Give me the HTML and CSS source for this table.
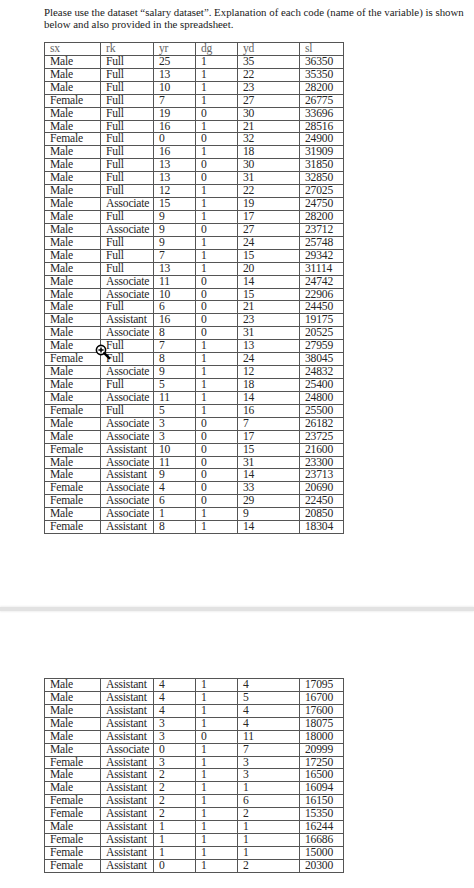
FILE: index.html
```html
<!DOCTYPE html>
<html>
<head>
<meta charset="utf-8">
<link rel="stylesheet" href="styles.css">
</head>
<body>
<div class="page">
  <section class="top">
    <p class="intro">Please use the dataset “salary dataset”. Explanation of each code (name of the variable) is shown below and also provided in the spreadsheet.</p>
    <div class="tablewrap">
      <table class="data">
        <colgroup><col class="c1"><col class="c2"><col class="c3"><col class="c4"><col class="c5"><col class="c6"></colgroup>
        <tr class="head"><td>sx</td><td>rk</td><td>yr</td><td>dg</td><td>yd</td><td>sl</td></tr>
        <tr><td>Male</td><td>Full</td><td>25</td><td>1</td><td>35</td><td>36350</td></tr>
        <tr><td>Male</td><td>Full</td><td>13</td><td>1</td><td>22</td><td>35350</td></tr>
        <tr><td>Male</td><td>Full</td><td>10</td><td>1</td><td>23</td><td>28200</td></tr>
        <tr><td>Female</td><td>Full</td><td>7</td><td>1</td><td>27</td><td>26775</td></tr>
        <tr><td>Male</td><td>Full</td><td>19</td><td>0</td><td>30</td><td>33696</td></tr>
        <tr><td>Male</td><td>Full</td><td>16</td><td>1</td><td>21</td><td>28516</td></tr>
        <tr><td>Female</td><td>Full</td><td>0</td><td>0</td><td>32</td><td>24900</td></tr>
        <tr><td>Male</td><td>Full</td><td>16</td><td>1</td><td>18</td><td>31909</td></tr>
        <tr><td>Male</td><td>Full</td><td>13</td><td>0</td><td>30</td><td>31850</td></tr>
        <tr><td>Male</td><td>Full</td><td>13</td><td>0</td><td>31</td><td>32850</td></tr>
        <tr><td>Male</td><td>Full</td><td>12</td><td>1</td><td>22</td><td>27025</td></tr>
        <tr><td>Male</td><td>Associate</td><td>15</td><td>1</td><td>19</td><td>24750</td></tr>
        <tr><td>Male</td><td>Full</td><td>9</td><td>1</td><td>17</td><td>28200</td></tr>
        <tr><td>Male</td><td>Associate</td><td>9</td><td>0</td><td>27</td><td>23712</td></tr>
        <tr><td>Male</td><td>Full</td><td>9</td><td>1</td><td>24</td><td>25748</td></tr>
        <tr><td>Male</td><td>Full</td><td>7</td><td>1</td><td>15</td><td>29342</td></tr>
        <tr><td>Male</td><td>Full</td><td>13</td><td>1</td><td>20</td><td>31114</td></tr>
        <tr><td>Male</td><td>Associate</td><td>11</td><td>0</td><td>14</td><td>24742</td></tr>
        <tr><td>Male</td><td>Associate</td><td>10</td><td>0</td><td>15</td><td>22906</td></tr>
        <tr><td>Male</td><td>Full</td><td>6</td><td>0</td><td>21</td><td>24450</td></tr>
        <tr><td>Male</td><td>Assistant</td><td>16</td><td>0</td><td>23</td><td>19175</td></tr>
        <tr><td>Male</td><td>Associate</td><td>8</td><td>0</td><td>31</td><td>20525</td></tr>
        <tr><td>Male</td><td>Full</td><td>7</td><td>1</td><td>13</td><td>27959</td></tr>
        <tr><td>Female</td><td>Full</td><td>8</td><td>1</td><td>24</td><td>38045</td></tr>
        <tr><td>Male</td><td>Associate</td><td>9</td><td>1</td><td>12</td><td>24832</td></tr>
        <tr><td>Male</td><td>Full</td><td>5</td><td>1</td><td>18</td><td>25400</td></tr>
        <tr><td>Male</td><td>Associate</td><td>11</td><td>1</td><td>14</td><td>24800</td></tr>
        <tr><td>Female</td><td>Full</td><td>5</td><td>1</td><td>16</td><td>25500</td></tr>
        <tr><td>Male</td><td>Associate</td><td>3</td><td>0</td><td>7</td><td>26182</td></tr>
        <tr><td>Male</td><td>Associate</td><td>3</td><td>0</td><td>17</td><td>23725</td></tr>
        <tr><td>Female</td><td>Assistant</td><td>10</td><td>0</td><td>15</td><td>21600</td></tr>
        <tr><td>Male</td><td>Associate</td><td>11</td><td>0</td><td>31</td><td>23300</td></tr>
        <tr><td>Male</td><td>Assistant</td><td>9</td><td>0</td><td>14</td><td>23713</td></tr>
        <tr><td>Female</td><td>Associate</td><td>4</td><td>0</td><td>33</td><td>20690</td></tr>
        <tr><td>Female</td><td>Associate</td><td>6</td><td>0</td><td>29</td><td>22450</td></tr>
        <tr><td>Male</td><td>Associate</td><td>1</td><td>1</td><td>9</td><td>20850</td></tr>
        <tr><td>Female</td><td>Assistant</td><td>8</td><td>1</td><td>14</td><td>18304</td></tr>
      </table>
      <svg class="cursor" width="16" height="18" viewBox="0 0 16 18">
        <circle cx="6" cy="6" r="4.6" fill="#fff" stroke="#000" stroke-width="1.6"/>
        <path d="M6 3.4V8.6M3.4 6H8.6" stroke="#000" stroke-width="1.5"/>
        <path d="M9.2 9.2L14.2 14.2" stroke="#000" stroke-width="2.4" stroke-linecap="round"/>
      </svg>
    </div>
  </section>
  <div class="divider"></div>
  <section class="bottom">
    <table class="data second">
      <colgroup><col class="c1"><col class="c2"><col class="c3"><col class="c4"><col class="c5"><col class="c6"></colgroup>
      <tr><td>Male</td><td>Assistant</td><td>4</td><td>1</td><td>4</td><td>17095</td></tr>
      <tr><td>Male</td><td>Assistant</td><td>4</td><td>1</td><td>5</td><td>16700</td></tr>
      <tr><td>Male</td><td>Assistant</td><td>4</td><td>1</td><td>4</td><td>17600</td></tr>
      <tr><td>Male</td><td>Assistant</td><td>3</td><td>1</td><td>4</td><td>18075</td></tr>
      <tr><td>Male</td><td>Assistant</td><td>3</td><td>0</td><td>11</td><td>18000</td></tr>
      <tr><td>Male</td><td>Associate</td><td>0</td><td>1</td><td>7</td><td>20999</td></tr>
      <tr><td>Female</td><td>Assistant</td><td>3</td><td>1</td><td>3</td><td>17250</td></tr>
      <tr><td>Male</td><td>Assistant</td><td>2</td><td>1</td><td>3</td><td>16500</td></tr>
      <tr><td>Male</td><td>Assistant</td><td>2</td><td>1</td><td>1</td><td>16094</td></tr>
      <tr><td>Female</td><td>Assistant</td><td>2</td><td>1</td><td>6</td><td>16150</td></tr>
      <tr><td>Female</td><td>Assistant</td><td>2</td><td>1</td><td>2</td><td>15350</td></tr>
      <tr><td>Male</td><td>Assistant</td><td>1</td><td>1</td><td>1</td><td>16244</td></tr>
      <tr><td>Female</td><td>Assistant</td><td>1</td><td>1</td><td>1</td><td>16686</td></tr>
      <tr><td>Female</td><td>Assistant</td><td>1</td><td>1</td><td>1</td><td>15000</td></tr>
      <tr><td>Female</td><td>Assistant</td><td>0</td><td>1</td><td>2</td><td>20300</td></tr>
    </table>
  </section>
</div>
</body>
</html>
```
FILE: styles.css
```css
html, body {
  margin: 0;
  padding: 0;
  background: #fff;
}
.page {
  width: 474px;
  font-family: "Liberation Serif", "Times New Roman", serif;
  color: #1e1e1e;
}
.top {
  padding: 6px 0 0 44px;
}
.intro {
  margin: 0;
  font-size: 10.85px;
  line-height: 12px;
  width: 428px;
  color: #1a1a1a;
}
.tablewrap {
  position: relative;
  margin-top: 12px;
  width: 300px;
}
.data {
  border-collapse: separate;
  border-spacing: 0;
  table-layout: fixed;
  width: 299px;
  font-size: 11.6px;
  letter-spacing: -0.2px;
  border-top: 1px solid #555;
  border-left: 1px solid #555;
}
.data td {
  box-sizing: border-box;
  height: 12.93px;
  border-right: 1px solid #555;
  border-bottom: 1px solid #555;
  line-height: 11.9px;
  padding: 0 0 0 5px;
  white-space: nowrap;
  color: #262626;
  vertical-align: middle;
}
.data .head td {
  color: #666;
}
.c1 { width: 56px; }
.c2 { width: 53px; }
.c3 { width: 42px; }
.c4 { width: 42px; }
.c5 { width: 62px; }
.c6 { width: 44px; }
.cursor {
  position: absolute;
  left: 51px;
  top: 302px;
}
.divider {
  margin-top: 73px;
  height: 4px;
  background: #e2e2e2;
  box-shadow: 0 1px 2px #f0f0f0, 0 -1px 2px #f0f0f0;
}
.bottom {
  padding: 67px 0 0 44px;
}
```
